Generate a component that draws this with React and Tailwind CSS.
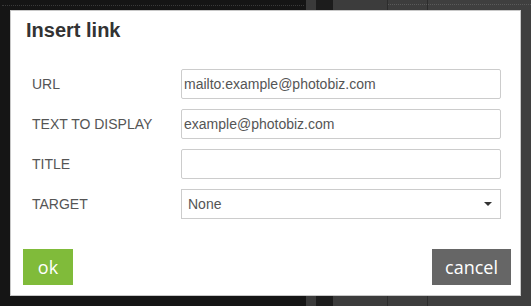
export default function App() {
  const rows = [
    { label: "URL", value: "mailto:example@photobiz.com" },
    { label: "TEXT TO DISPLAY", value: "example@photobiz.com" },
    { label: "TITLE", value: "" },
  ];
  return (
    <div className="relative w-[531px] h-[306px] overflow-hidden" style={{ fontFamily: '"Liberation Sans", Arial, sans-serif' }}>
      {/* background app */}
      <div className="flex h-full w-full">
        <div className="w-[306px] h-full bg-[#151515] pt-[5px]">
          <div className="border-t border-dotted border-[#3a3a3a] mx-[2px]" />
        </div>
        <div className="w-[10px] h-full bg-[#3a3a3a]" />
        <div className="w-[17px] h-full bg-[#1c1c1c]" />
        <div className="w-[54px] h-full bg-[#3c3c3c]" />
        <div className="w-px h-full bg-[#2c2c2c]" />
        <div className="w-[39px] h-full bg-[#3d3d3d] pt-[4px]">
          <div className="border-t border-dotted border-[#5a5a5a]" />
        </div>
        <div className="w-px h-full bg-[#2c2c2c]" />
        <div className="flex-1 h-full bg-[#3f3f3f] pt-[4px]">
          <div className="border-t border-dotted border-[#5a5a5a]" />
        </div>
      </div>

      {/* modal dialog */}
      <div className="absolute left-[10px] top-[10px] w-[511px] h-[286px] bg-white border border-[#c8c8c8] flex flex-col">
        <h2 className="pl-[15px] pt-[7px] text-[20px] leading-[24px] font-bold text-[#333333]">Insert link</h2>
        <div className="mt-[27px] pl-[21px] flex flex-col gap-[10px]">
          {rows.map((r) => (
            <div key={r.label} className="flex items-center h-[30px]">
              <div className="w-[149px] text-[14px] text-[#555555]">{r.label}</div>
              <div className="w-[320px] h-[30px] border border-[#cccccc] rounded-[2px] px-[2px] flex items-center text-[14px] text-[#555555]">
                {r.value}
              </div>
            </div>
          ))}
          <div className="flex items-center h-[30px]">
            <div className="w-[149px] text-[14px] text-[#555555]">TARGET</div>
            <div className="w-[320px] h-[30px] border border-[#cccccc] pl-[6px] pr-[8px] flex items-center justify-between text-[14px] text-[#555555]">
              <span>None</span>
              <svg width="8" height="4" viewBox="0 0 8 4"><path d="M0 0H8L4 4Z" fill="#333" /></svg>
            </div>
          </div>
        </div>
        <div className="mt-auto flex justify-between pl-[12px] pr-[9px] pb-[10px]" style={{ fontFamily: '"Open Sans", sans-serif' }}>
          <button className="w-[50px] h-[36px] bg-[#80bb3a] text-white text-[18px] flex items-center justify-center">ok</button>
          <button className="w-[79px] h-[36px] bg-[#666666] text-white text-[18px] flex items-center justify-center">cancel</button>
        </div>
      </div>
    </div>
  );
}
